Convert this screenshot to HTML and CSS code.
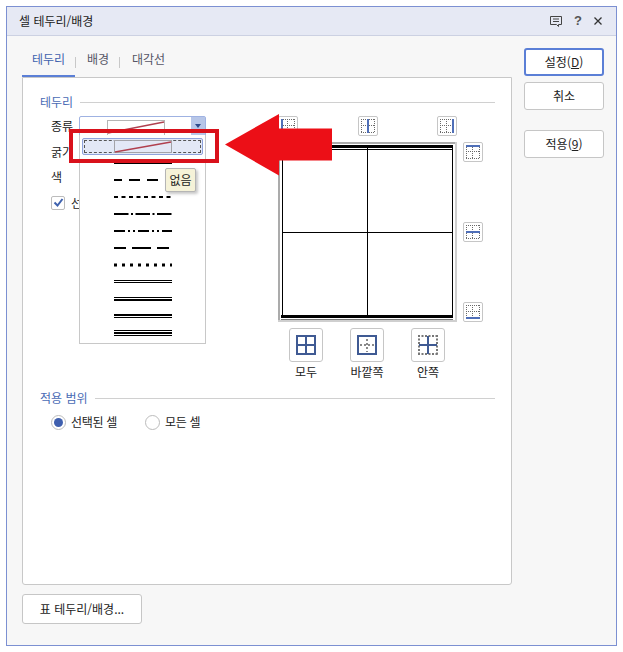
FILE: index.html
```html
<!DOCTYPE html>
<html lang="ko">
<head>
<meta charset="utf-8">
<title>셀 테두리/배경</title>
<link rel="stylesheet" href="styles.css">
</head>
<body>
<div class="window">
  <header class="titlebar">
    <span class="title">셀 테두리/배경</span>
    <div class="title-icons">
      <svg width="14" height="14" viewBox="0 0 14 14"><path d="M1.500 2.500h11v8h-3v2l-2-2h-6z M4 5h6 M4 7.500h6" fill="none" stroke="#444" stroke-width="1"/></svg>
      <span class="help">?</span>
      <svg width="10" height="10" viewBox="0 0 10 10"><path d="M1.500 1.500l7 7M8.500 1.500l-7 7" fill="none" stroke="#333" stroke-width="1.300"/></svg>
    </div>
  </header>
  <div class="main">
    <div class="left">
      <nav class="tabs">
        <span class="tab active">테두리</span>
        <span class="tab">배경</span>
        <span class="tab last">대각선</span>
      </nav>
      <section class="panel">
        <div class="section-head"><span>테두리</span><i></i></div>
        <div class="content">
          <div class="form">
            <div class="row">종류</div>
            <div class="row">굵기</div>
            <div class="row">색</div>
            <label class="row check"><span class="checkbox"><svg width="11" height="11" viewBox="0 0 11 11"><path d="M1.500 5.500l3 3 5-6.500" fill="none" stroke="#3f62ae" stroke-width="2"/></svg></span>선 모양 바로 적용</label>

            <div class="combo">
              <div class="combo-value">
                <svg width="58" height="15" viewBox="0 0 58 15"><rect x=".5" y=".5" width="57" height="16" fill="#fff" stroke="#b5b5b5"/><path d="M1 13L57 2" stroke="#b0404f" stroke-width="1.300"/></svg>
              </div>
              <div class="combo-arrow"><b></b></div>
            </div>
            <ul class="list">
              <li class="selected"><div class="focus"><svg width="58" height="13" viewBox="0 0 58 13"><rect x=".5" y=".5" width="57" height="12" fill="none" stroke="#a3a3a8"/><path d="M1 12L57 2" stroke="#b0404f" stroke-width="1.300"/></svg></div></li>
              <li><svg width="58" height="5" viewBox="0 0 58 5"><path d="M0 2.500H58" stroke="#000" stroke-width="3"/></svg></li>
              <li><svg width="58" height="5" viewBox="0 0 58 5"><path d="M0 3H58" stroke="#000" stroke-width="2" stroke-dasharray="11 7" stroke-dashoffset="3"/></svg></li>
              <li><svg width="58" height="5" viewBox="0 0 58 5"><path d="M0 3H58" stroke="#000" stroke-width="2" stroke-dasharray="4 3.500"/></svg></li>
              <li><svg width="58" height="5" viewBox="0 0 58 5"><path d="M0 3H58" stroke="#000" stroke-width="2" stroke-dasharray="14.500 2.500 2 2.500"/></svg></li>
              <li><svg width="58" height="5" viewBox="0 0 58 5"><path d="M0 3H58" stroke="#000" stroke-width="2" stroke-dasharray="11 3 2 3 2 3"/></svg></li>
              <li><svg width="58" height="5" viewBox="0 0 58 5"><path d="M0 3H58" stroke="#000" stroke-width="2" stroke-dasharray="12 6 19 6"/></svg></li>
              <li><svg width="58" height="5" viewBox="0 0 58 5"><path d="M0 3H58" stroke="#000" stroke-width="3.200" stroke-dasharray="3 5"/></svg></li>
              <li><svg width="58" height="5" viewBox="0 0 58 5"><path d="M0 1.500H58M0 3.500H58" stroke="#000" stroke-width="1"/></svg></li>
              <li><svg width="58" height="5" viewBox="0 0 58 5"><path d="M0 1.500H58" stroke="#000"/><path d="M0 4H58" stroke="#000" stroke-width="2"/></svg></li>
              <li><svg width="58" height="5" viewBox="0 0 58 5"><path d="M0 2H58" stroke="#000" stroke-width="2"/><path d="M0 4.500H58" stroke="#000"/></svg></li>
              <li><svg width="58" height="7" viewBox="0 0 58 7"><path d="M0 1.500H58M0 6.500H58" stroke="#000"/><path d="M0 4H58" stroke="#000" stroke-width="2"/></svg></li>
            </ul>
            <div class="tooltip">없음</div>
          </div>

          <div class="editor">
            <div class="edge-row">
              <button class="edge"><svg width="14" height="14" viewBox="0 0 14 14"><path class="dots" d="M0 .5H14M0 13.500H14M13.500 0V14M6.500 0V14M0 6.500H14"/><path class="bar" d="M1 0V14"/></svg></button>
              <button class="edge"><svg width="14" height="14" viewBox="0 0 14 14"><path class="dots" d="M0 .5H14M0 13.500H14M.5 0V14M13.500 0V14M0 6.500H14"/><path class="bar" d="M7 0V14"/></svg></button>
              <button class="edge"><svg width="14" height="14" viewBox="0 0 14 14"><path class="dots" d="M0 .5H14M0 13.500H14M.5 0V14M6.500 0V14M0 6.500H14"/><path class="bar" d="M13 0V14"/></svg></button>
            </div>
            <div class="preview-row">
              <div class="preview">
                <svg width="179" height="180" viewBox="0 0 179 180">
                  <rect x="1" y="1" width="177" height="178" fill="#fff" stroke="#ababab" stroke-width="2"/>
                  <path d="M178 0V180M0 179H179" stroke="#cfcfcf" stroke-width="2"/>
                  <path d="M4.500 5V174M174.500 5V174M89.500 5V174M4 90.500H175" stroke="#000" fill="none"/>
                  <path d="M3 4.500H175M3 174.500H175" stroke="#000" stroke-width="3"/>
                  <path d="M3 7.500H175" stroke="#000"/>
                  <path d="M3 177.500H175" stroke="#777"/>
                </svg>
              </div>
              <div class="edge-col">
                <button class="edge"><svg width="14" height="14" viewBox="0 0 14 14"><path class="dots" d="M0 13.500H14M.5 0V14M13.500 0V14M6.500 0V14M0 6.500H14"/><path class="bar" d="M0 1H14"/></svg></button>
                <button class="edge"><svg width="14" height="14" viewBox="0 0 14 14"><path class="dots" d="M0 .5H14M0 13.500H14M.5 0V14M13.500 0V14M6.500 0V14"/><path class="bar" d="M0 7H14"/></svg></button>
                <button class="edge"><svg width="14" height="14" viewBox="0 0 14 14"><path class="dots" d="M0 .5H14M.5 0V14M13.500 0V14M6.500 0V14M0 6.500H14"/><path class="bar" d="M0 13H14"/></svg></button>
              </div>
            </div>
            <div class="preset-row">
              <div class="preset">
                <button class="preset-btn"><svg width="20" height="20" viewBox="0 0 20 20"><path d="M1 1H19V19H1ZM10 1V19M1 10H19" fill="none" stroke="#3f5a93" stroke-width="2"/></svg></button>
                <span>모두</span>
              </div>
              <div class="preset">
                <button class="preset-btn"><svg width="20" height="20" viewBox="0 0 20 20"><path d="M10 4V17M3 10H17" fill="none" stroke="#8a8a8a" stroke-width="2" stroke-dasharray="2 2"/><path d="M1 1H19V19H1Z" fill="none" stroke="#3f5a93" stroke-width="2"/></svg></button>
                <span>바깥쪽</span>
              </div>
              <div class="preset">
                <button class="preset-btn"><svg width="20" height="20" viewBox="0 0 20 20"><path d="M0 1H20M0 19H20M1 0V20M19 0V20" fill="none" stroke="#777" stroke-width="2" stroke-dasharray="2 1.500"/><path d="M10 1V19M1 10H19" fill="none" stroke="#3f5a93" stroke-width="2"/></svg></button>
                <span>안쪽</span>
              </div>
            </div>
          </div>
        </div>
        <div class="section-head second"><span>적용 범위</span><i></i></div>
        <div class="radios">
          <label class="radio on"><b></b><span>선택된 셀</span></label>
          <label class="radio"><b></b><span>모든 셀</span></label>
        </div>

        <div class="highlight"></div>
        <svg class="arrow" width="108" height="62" viewBox="0 0 108 62"><path d="M1 30.500L55 0V14.500H108V46.500H55V61.500Z" fill="#ec0f17"/></svg>
      </section>
      <button class="btn wide">표 테두리/배경...</button>
    </div>
    <aside class="actions">
      <button class="btn primary">설정(<u>D</u>)</button>
      <button class="btn">취소</button>
      <button class="btn apply">적용(<u>9</u>)</button>
    </aside>
  </div>
</div>
</body>
</html>
```

FILE: styles.css
```css
* { box-sizing: border-box; }
html, body { margin: 0; padding: 0; background: #fff; }
body {
  padding: 6px 0 0 6px;
  font: 12px/16px "Noto Sans CJK KR", "Noto Sans", sans-serif;
  color: #222;
}
button { font: inherit; color: inherit; padding: 0; }
ul { list-style: none; margin: 0; padding: 0; }

.window {
  width: 611px;
  height: 640px;
  border: 1px solid #7c90d2;
  background: #f7f7f7;
  display: flex;
  flex-direction: column;
}
.titlebar {
  height: 29px;
  flex: none;
  background: #e6e9f4;
  border-bottom: 1px solid #ccd1e2;
  display: flex;
  align-items: center;
  justify-content: space-between;
  padding: 0 13px 0 12px;
}
.title-icons { display: flex; align-items: center; gap: 11px; }
.help { font: bold 13px/14px "Liberation Sans", sans-serif; color: #555; width: 8px; }

.main { display: flex; flex: 1; padding: 12px 12px 0 15px; gap: 12px; }
.left { width: 490px; display: flex; flex-direction: column; }
.actions { width: 80px; display: flex; flex-direction: column; gap: 6px; }

.tabs { height: 29px; display: flex; align-items: center; padding-top: 1px; }
.tab {
  position: relative;
  height: 100%;
  padding: 2px 0 0;
  width: 44px;
  text-align: center;
  color: #556;
}
.tab::after {
  content: "";
  position: absolute;
  right: 0;
  top: 8px;
  height: 11px;
  width: 1px;
  background: #c8c8c8;
}
.tab.active { width: 53px; margin-right: 1px; color: #3f62ae; border-bottom: 2px solid #5b7fd6; }
.tab.active::after { right: -1px; }
.tab.last { width: 57px; }
.tab.last::after { display: none; }

.panel {
  position: relative;
  height: 508px;
  background: #fff;
  border: 1px solid #c8c8c8;
  border-radius: 0 0 3px 3px;
  padding: 16px 16px 0 17px;
}
.section-head { display: flex; align-items: center; gap: 7px; color: #4a6bb5; height: 16px; }
.section-head i { flex: 1; height: 1px; background: #d0d0d0; }
.section-head.second { margin-top: 10px; }

.content { display: flex; height: 264px; margin-top: 6px; }
.form { position: relative; width: 238px; padding-left: 11px; display: flex; flex-direction: column; gap: 5.500px; }
.row { height: 20px; display: flex; align-items: center; }
.check { gap: 6px; }
.checkbox {
  width: 14px;
  height: 14px;
  flex: none;
  border: 1px solid #bcbcbc;
  border-radius: 2px;
  background: #fff;
  display: flex;
  align-items: center;
  justify-content: center;
}

.combo {
  position: absolute;
  left: 39px;
  top: 0;
  width: 127px;
  height: 20px;
  background: #fff;
  border: 1px solid #9fb2e2;
  border-radius: 2px 2px 0 0;
  display: flex;
}
.combo-value { flex: 1; display: flex; justify-content: center; padding-top: 3px; overflow: hidden; }
.combo-arrow {
  width: 14px;
  background: #b7c6e8;
  display: flex;
  align-items: center;
  justify-content: center;
}
.combo-arrow b {
  width: 0;
  height: 0;
  border: 3px solid transparent;
  border-top: 4px solid #2e4a8c;
  border-bottom: 0;
}
.list {
  position: absolute;
  left: 39px;
  top: 19px;
  width: 127px;
  height: 209px;
  background: #fff;
  border: 1px solid #c8c8c8;
  border-top: 0;
  padding-top: 3px;
}
.list li {
  height: 17px;
  display: flex;
  align-items: center;
  justify-content: center;
}
.list li.selected {
  margin: 0 2px -1px;
  padding: 1px;
  background: #e3e8f6;
  border: 1px solid #8fa3dc;
  border-radius: 2px;
}
.focus {
  width: 100%;
  height: 100%;
  border: 1px dashed #555;
  display: flex;
  justify-content: center;
  position: relative;
}
.focus svg { margin-left: 1px; margin-top: -1px; flex: none; }
.tooltip {
  position: absolute;
  left: 125px;
  top: 52px;
  width: 31px;
  height: 24px;
  background: #f5f2d8;
  border: 1px solid #b5b5b5;
  border-radius: 2px;
  box-shadow: 2px 2px 3px rgba(0,0,0,.22);
  text-align: center;
  line-height: 21px;
}

.editor { width: 205px; display: flex; flex-direction: column; }
.edge-row { display: flex; justify-content: space-between; width: 179px; }
.edge {
  width: 20px;
  height: 20px;
  border: 1px solid #c6c6c6;
  border-radius: 2px;
  background: #fff;
  display: flex;
  align-items: center;
  justify-content: center;
}
.dots { fill: none; stroke: #6a6a6a; stroke-width: 1; stroke-dasharray: 1 1; }
.bar { fill: none; stroke: #4f6fb8; stroke-width: 2; }
.preview-row { display: flex; gap: 6px; margin-top: 6px; }
.preview { width: 179px; height: 180px; }
.preview svg { display: block; }
.edge-col { display: flex; flex-direction: column; justify-content: space-between; height: 180px; }
.preset-row { display: flex; gap: 13px; margin: 6px 0 0 4px; }
.preset { width: 48px; display: flex; flex-direction: column; align-items: center; gap: 2px; }
.preset-btn {
  width: 34px;
  height: 34px;
  border: 1px solid #c6c6c6;
  border-radius: 3px;
  background: #fff;
  display: flex;
  align-items: center;
  justify-content: center;
}

.radios { display: flex; gap: 28px; margin: 8px 0 0 11px; }
.radio { display: flex; align-items: center; gap: 5px; letter-spacing: -.3px; }
.radio b {
  width: 15px;
  height: 15px;
  border-radius: 50%;
  border: 1px solid #bcbcbc;
  background: #fff;
  display: flex;
  align-items: center;
  justify-content: center;
}
.radio.on b::after {
  content: "";
  width: 9px;
  height: 9px;
  border-radius: 50%;
  background: #3f5fae;
}

.highlight {
  position: absolute;
  left: 46px;
  top: 51px;
  width: 150px;
  height: 34px;
  border: 4px solid #d9111b;
}
.arrow { position: absolute; left: 201px; top: 36px; }

.btn {
  height: 28px;
  background: #fff;
  border: 1px solid #c6c6c6;
  border-radius: 3px;
  text-align: center;
}
.btn.primary { border: 2px solid #5b7fd6; }
.btn.apply { margin-top: 14px; }
.btn.wide { width: 120px; height: 30px; margin-top: 9px; }
```
